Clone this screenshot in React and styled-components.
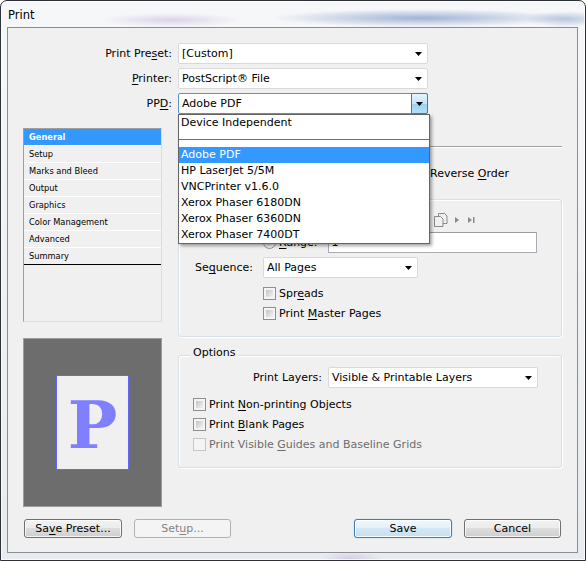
import React from "react";
import styled, { createGlobalStyle } from "styled-components";

const GlobalStyle = createGlobalStyle`
  html, body {
    margin: 0;
    padding: 0;
  }
  body {
    font-family: "DejaVu Sans", "Liberation Sans", sans-serif;
    font-size: 11px;
    color: #000;
    background: #fff;
  }
  * {
    box-sizing: border-box;
  }
  u {
    text-decoration-thickness: 1px;
    text-underline-offset: 2px;
  }
`;

const Window = styled.div`
  width: 586px;
  height: 561px;
  display: flex;
  flex-direction: column;
  padding: 0 7px 7px 6px;
  border: 1px solid #2e3236;
  border-radius: 7px 7px 0 0;
  box-shadow: inset 0 0 0 1px rgba(255, 255, 255, 0.7);
  background:
    radial-gradient(70px 7px at 170px 19px, rgba(150, 120, 190, 0.28), transparent),
    radial-gradient(150px 9px at 420px 17px, rgba(90, 125, 185, 0.55), transparent),
    radial-gradient(40px 8px at 565px 18px, rgba(90, 125, 185, 0.4), transparent),
    radial-gradient(30px 6px at 350px 557px, rgba(150, 120, 190, 0.25), transparent),
    linear-gradient(#f6f7f9, #e8ebef);
`;

const TitleBar = styled.div`
  height: 26px;
  padding: 2px 0 0 1px;
  line-height: 24px;
  font-size: 11.5px;
  color: #000;
`;

const Client = styled.div`
  flex: 1;
  display: flex;
  flex-direction: column;
  background: #f0f0f0;
  border: 1px solid #8a8d91;
`;

const TopForm = styled.div`
  display: grid;
  grid-template-columns: 164px 250px;
  column-gap: 6px;
  row-gap: 4px;
  padding-top: 15px;
`;

const FormLabel = styled.label`
  text-align: right;
  line-height: 21px;
  white-space: nowrap;
`;

const SelectBox = styled.div`
  position: relative;
  display: flex;
  align-items: center;
  width: ${(p) => (p.$width ? `${p.$width}px` : "auto")};
  height: 21px;
  padding-left: 3px;
  background: #fff;
  border: 1px solid ${(p) => (p.$open ? "#5c93c9" : "#d9d9d9")};
  border-radius: 2px;
`;

const SelectText = styled.span`
  flex: 1;
  white-space: nowrap;
`;

const ArrowButton = styled.span`
  align-self: stretch;
  width: 17px;
  display: flex;
  align-items: center;
  justify-content: center;
  ${(p) =>
    p.$open &&
    `
    margin: -1px -1px -1px 0;
    border: 1px solid #3c7fb1;
    border-radius: 0 2px 2px 0;
    background: linear-gradient(#e5f4fc, #c4e5f6 50%, #98d1ef 50%, #b3e0f6);
  `}
`;

const DropList = styled.div`
  position: absolute;
  top: calc(100% + 1px);
  left: -1px;
  width: 252px;
  z-index: 10;
  background: #fff;
  border: 1px solid #646464;
  box-shadow: 2px 2px 3px rgba(0, 0, 0, 0.35);
`;

const DropItem = styled.div`
  height: 16px;
  line-height: 16px;
  padding-left: 2px;
  white-space: nowrap;
  background: ${(p) => (p.$selected ? "#3399ff" : "transparent")};
  color: ${(p) => (p.$selected ? "#fff" : "#000")};
`;

const DropSeparator = styled.div`
  height: 16px;
  display: flex;
  align-items: center;
  &::after {
    content: "";
    flex: 1;
    height: 1px;
    background: #6e6e6e;
  }
`;

const Body = styled.div`
  display: flex;
  gap: 16px;
  margin-top: 14px;
  padding: 0 15px;
`;

const LeftColumn = styled.div`
  width: 139px;
  display: flex;
  flex-direction: column;
  gap: 16px;
`;

const CategoryList = styled.div`
  height: 194px;
  border: 1px solid;
  border-color: #a0a0a0 #dcdcdc #dcdcdc #a0a0a0;
  background: #f0f0f0;
  font-family: "DejaVu Sans Condensed", "DejaVu Sans", sans-serif;
  font-size: 9.2px;
`;

const CategoryItem = styled.div`
  height: 17px;
  line-height: 16px;
  padding-left: 5px;
  border-bottom: 1px solid ${(p) => (p.$last ? "#000" : "#fff")};
  background: ${(p) => (p.$selected ? "#3399ff" : "transparent")};
  color: ${(p) => (p.$selected ? "#fff" : "#000")};
  font-weight: ${(p) => (p.$selected ? "bold" : "normal")};
  white-space: nowrap;
`;

const Preview = styled.div`
  height: 169px;
  display: flex;
  align-items: center;
  justify-content: center;
  background: #6d6d6d;
  border: 1px solid #9c9c9c;
`;

const PreviewPage = styled.div`
  width: 73px;
  height: 95px;
  display: flex;
  align-items: center;
  justify-content: center;
  background: #f0f0f0;
  border: 1px solid #6464ff;
`;

const PageLetter = styled.span`
  font-family: "DejaVu Serif", "Liberation Serif", serif;
  font-weight: 600;
  font-size: 66px;
  line-height: 1;
  color: #8080ff;
  margin-top: 4px;
`;

const RightColumn = styled.div`
  width: 384px;
  display: flex;
  flex-direction: column;
`;

const Divider = styled.div`
  height: 19px;
  border-bottom: 1px solid #a0a0a0;
  box-shadow: 0 1px 0 #fff;
`;

const FieldRow = styled.div`
  display: flex;
  align-items: center;
  height: ${(p) => p.$h || 21}px;
  margin-top: ${(p) => p.$mt || 0}px;
  padding-left: ${(p) => p.$pl || 0}px;
`;

const FieldLabel = styled.span`
  width: ${(p) => p.$w}px;
  margin-right: ${(p) => p.$gap ?? 10}px;
  text-align: right;
  white-space: nowrap;
`;

const TextInput = styled.div`
  width: ${(p) => (p.$width ? `${p.$width}px` : "auto")};
  flex: ${(p) => (p.$width ? "none" : 1)};
  height: 21px;
  line-height: 19px;
  padding-left: 3px;
  margin-left: ${(p) => p.$ml || 0}px;
  background: #fff;
  border: 1px solid #abadb3;
  border-top-color: #9a9ca2;
`;

const CheckItem = styled.span`
  display: inline-flex;
  align-items: center;
  gap: 3px;
  margin-left: ${(p) => p.$ml || 0}px;
  color: ${(p) => (p.$disabled ? "#6d6d6d" : "#000")};
  white-space: nowrap;
`;

const CheckText = styled.span`
  white-space: nowrap;
`;

const CheckBox = styled.span`
  width: 13px;
  height: 13px;
  flex: none;
  padding: 2px;
  border: 1px solid ${(p) => (p.$disabled ? "#c5c5c5" : "#8e8f8f")};
  border-radius: ${(p) => (p.$round ? "50%" : "0")};
  background: ${(p) =>
    p.$disabled
      ? "#f4f4f4"
      : "linear-gradient(135deg, #c4c4c4, #f3f3f3) content-box, #f4f4f4"};
`;

const Group = styled.div`
  margin-top: ${(p) => p.$mt}px;
  padding: 0 ${(p) => p.$pr || 0}px ${(p) => p.$pb}px 0;
  border: 1px solid #d5dfe5;
  border-radius: 3px;
  box-shadow: inset 1px 1px 0 #fff, 1px 1px 0 #fff;
`;

const GroupLegend = styled.div`
  width: fit-content;
  min-width: 40px;
  height: 14px;
  margin: -10px 0 0 11px;
  padding: 0 3px;
  line-height: 14px;
  background: #f0f0f0;
`;

const PageNav = styled.svg`
  margin-left: 158px;
  margin-top: -2px;
`;

const Footer = styled.div`
  display: flex;
  gap: 12px;
  margin-top: 12px;
  padding: 0 16px;
`;

const Spacer = styled.div`
  flex: 1;
`;

const Button = styled.button`
  width: ${(p) => p.$width}px;
  height: 19px;
  padding: 0;
  font: inherit;
  line-height: 17px;
  border-radius: 3px;
  border: 1px solid #707070;
  color: #000;
  background: linear-gradient(#f2f2f2 0%, #ebebeb 50%, #dddddd 50%, #cfcfcf 100%);
  box-shadow: inset 0 0 0 1px rgba(255, 255, 255, 0.8);

  ${(p) =>
    p.$default &&
    `
    border-color: #3c7fb1;
    background: linear-gradient(#f1f8fd 0%, #e3f0f9 50%, #d3e7f5 50%, #c6e0f2 100%);
    box-shadow: inset 0 0 0 1px rgba(255, 255, 255, 0.9), 0 0 1px #5ab2e8;
  `}

  ${(p) =>
    p.disabled &&
    `
    border-color: #adb2b5;
    background: #f4f4f4;
    color: #838383;
    box-shadow: none;
  `}
`;

function Arrow() {
  return (
    <svg width="7" height="4" viewBox="0 0 7 4">
      <path d="M0 0h7L3.5 4z" fill="#000" />
    </svg>
  );
}

function Select({ value, width, open, children }) {
  return (
    <SelectBox $width={width} $open={open}>
      <SelectText>{value}</SelectText>
      <ArrowButton $open={open}>
        <Arrow />
      </ArrowButton>
      {children}
    </SelectBox>
  );
}

function Check({ children, round, disabled, ml }) {
  return (
    <CheckItem $disabled={disabled} $ml={ml}>
      <CheckBox $round={round} $disabled={disabled} />
      {children && <CheckText>{children}</CheckText>}
    </CheckItem>
  );
}

const ppdOptions = [
  "Adobe PDF",
  "HP LaserJet 5/5M",
  "VNCPrinter v1.6.0",
  "Xerox Phaser 6180DN",
  "Xerox Phaser 6360DN",
  "Xerox Phaser 7400DT",
];

const categories = [
  "General",
  "Setup",
  "Marks and Bleed",
  "Output",
  "Graphics",
  "Color Management",
  "Advanced",
  "Summary",
];

export default function App() {
  return (
    <>
      <GlobalStyle />
      <Window>
        <TitleBar>Print</TitleBar>
        <Client>
          <TopForm>
            <FormLabel>
              Print Pre<u>s</u>et:
            </FormLabel>
            <Select value="[Custom]" />
            <FormLabel>
              <u>P</u>rinter:
            </FormLabel>
            <Select value="PostScript® File" />
            <FormLabel>
              PP<u>D</u>:
            </FormLabel>
            <Select value="Adobe PDF" open>
              <DropList>
                <DropItem>Device Independent</DropItem>
                <DropSeparator />
                {ppdOptions.map((o) => (
                  <DropItem key={o} $selected={o === "Adobe PDF"}>
                    {o}
                  </DropItem>
                ))}
              </DropList>
            </Select>
          </TopForm>

          <Body>
            <LeftColumn>
              <CategoryList>
                {categories.map((c, i) => (
                  <CategoryItem
                    key={c}
                    $selected={i === 0}
                    $last={i === categories.length - 1}
                  >
                    {c}
                  </CategoryItem>
                ))}
              </CategoryList>
              <Preview>
                <PreviewPage>
                  <PageLetter>P</PageLetter>
                </PreviewPage>
              </Preview>
            </LeftColumn>

            <RightColumn>
              <Divider />
              {/* copies row: label, field and Collate sit under the open PPD list */}
              <FieldRow $mt={16}>
                <FieldLabel $w={75} />
                <TextInput $width={50} />
                <Check ml={14} />
                <Check ml={74}>
                  Reverse <u>O</u>rder
                </Check>
              </FieldRow>

              <Group $mt={15} $pb={12.5} $pr={24}>
                <GroupLegend />
                <FieldRow $mt={8} $h={18}>
                  <FieldLabel $w={74} />
                  <Check round />
                  <PageNav width="44" height="14" viewBox="0 0 44 14">
                    <path
                      d="M4.5 0.5h6l2.5 2.5v7.5h-8.5z"
                      fill="#f0f0f0"
                      stroke="#8a8a8a"
                    />
                    <path
                      d="M0.5 3.5h6l2.5 2.5v7.5h-8.5z"
                      fill="#f0f0f0"
                      stroke="#8a8a8a"
                    />
                    <path d="M21 4l4 3l-4 3z" fill="#8a8a8a" />
                    <path d="M34 4l4 3l-4 3z M39 4h1.5v6h-1.5z" fill="#8a8a8a" />
                  </PageNav>
                </FieldRow>
                <FieldRow $mt={2}>
                  <FieldLabel $w={74} />
                  <Check round>
                    <u>R</u>ange:
                  </Check>
                  <TextInput $ml={10}>1</TextInput>
                </FieldRow>
                <FieldRow $mt={4}>
                  <FieldLabel $w={74}>
                    Se<u>q</u>uence:
                  </FieldLabel>
                  <Select value="All Pages" width={155} />
                </FieldRow>
                <FieldRow $mt={5.5} $h={20} $pl={84}>
                  <Check>
                    Spr<u>e</u>ads
                  </Check>
                </FieldRow>
                <FieldRow $h={20} $pl={84}>
                  <Check>
                    Print <u>M</u>aster Pages
                  </Check>
                </FieldRow>
              </Group>

              <Group $mt={18} $pb={12}>
                <GroupLegend>Options</GroupLegend>
                <FieldRow $mt={7}>
                  <FieldLabel $w={143} $gap={6}>
                    Print Layers:
                  </FieldLabel>
                  <Select value="Visible & Printable Layers" width={210} />
                </FieldRow>
                <FieldRow $mt={6.5} $h={20} $pl={14}>
                  <Check>
                    Print <u>N</u>on-printing Objects
                  </Check>
                </FieldRow>
                <FieldRow $h={20} $pl={14}>
                  <Check>
                    Print <u>B</u>lank Pages
                  </Check>
                </FieldRow>
                <FieldRow $h={20} $pl={14}>
                  <Check disabled>
                    Print Visible <u>G</u>uides and Baseline Grids
                  </Check>
                </FieldRow>
              </Group>
            </RightColumn>
          </Body>

          <Footer>
            <Button $width={98}>
              Sa<u>v</u>e Preset...
            </Button>
            <Button $width={97} disabled>
              Set<u>u</u>p...
            </Button>
            <Spacer />
            <Button $width={98} $default>
              Save
            </Button>
            <Button $width={97}>Cancel</Button>
          </Footer>
        </Client>
      </Window>
    </>
  );
}
